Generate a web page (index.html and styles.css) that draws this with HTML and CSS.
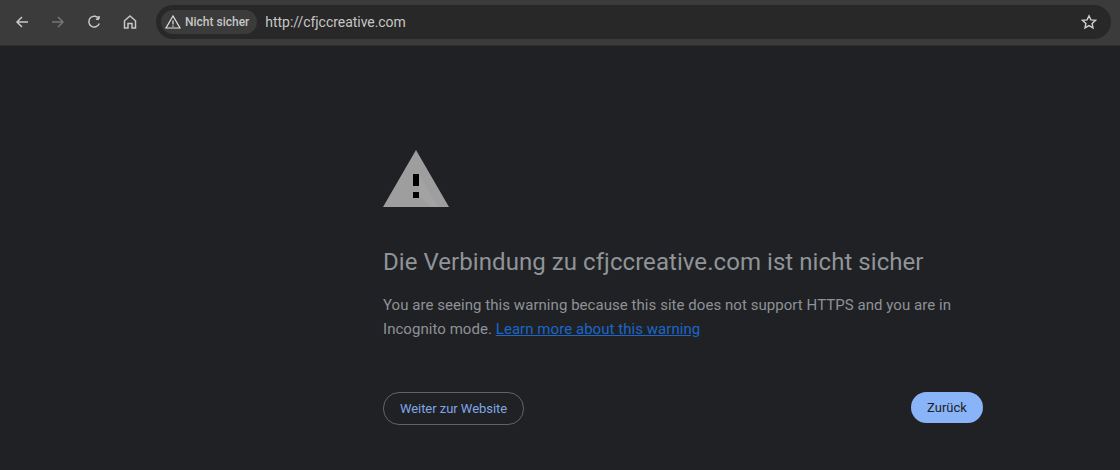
FILE: index.html
```html
<!DOCTYPE html>
<html lang="de">
<head>
  <meta charset="UTF-8" />
  <title>Die Verbindung ist nicht sicher</title>
  <link rel="stylesheet" href="styles.css">
</head>
<body>
  <div class="toolbar">
    <div class="nav-buttons">
      <svg class="nav-icon" viewBox="0 0 16 16"><path d="M14 8H3M8 3 3 8l5 5"/></svg>
      <svg class="nav-icon dim" viewBox="0 0 16 16"><path d="M2 8h11M8 3l5 5-5 5"/></svg>
      <svg class="nav-icon" viewBox="0 0 16 16"><path d="M13 4.800V1.900M13 5.200H9.900M13 5A5.400 5.400 0 1 0 13.300 9.500"/></svg>
      <svg class="nav-icon" viewBox="0 0 16 16"><path d="M2.500 14V6.800L8 2l5.500 4.800V14H10V9.500H6V14z"/></svg>
    </div>
    <div class="omnibox">
      <div class="chip">
        <svg class="chip-icon" viewBox="0 0 16 16"><path d="M8 2 1 14h14z"/><path d="M8 6.500v4M8 11.500v1.200"/></svg>
        <span>Nicht sicher</span>
      </div>
      <span class="url">http://cfjccreative.com</span>
      <svg class="star" viewBox="0 0 16 16"><path d="M8 1.800l1.900 4.100 4.500.5-3.300 3 .9 4.400L8 11.600l-4 2.200.9-4.400-3.300-3 4.500-.5z"/></svg>
    </div>
  </div>

  <main class="content">
    <div class="warning">
      <svg class="warning-icon" viewBox="0 0 66 58">
        <path class="triangle" d="M33 0 66 57H0z"/>
        <path class="triangle-shade" d="M36 24l19 33H48L36 45z"/>
        <rect class="mark" x="30" y="24" width="6" height="12"/>
        <rect class="mark" x="30" y="42" width="6" height="6"/>
      </svg>
      <h1>Die Verbindung zu cfjccreative.com ist nicht sicher</h1>
      <p>You are seeing this warning because this site does not support HTTPS and you are in<br>Incognito mode. <a href="#">Learn more about this warning</a></p>
      <div class="actions">
        <button class="btn-outline">Weiter zur Website</button>
        <button class="btn-primary">Zurück</button>
      </div>
    </div>
  </main>
</body>
</html>
```

FILE: styles.css
```css
html, body {
  margin: 0;
  height: 100%;
}

body {
  background-color: #202124;
  font-family: Roboto, "Liberation Sans", sans-serif;
  overflow: hidden;
}

.toolbar {
  height: 46px;
  background-color: #3b3b3b;
  border-bottom: 1px solid #2e2e2e;
  display: flex;
  align-items: center;
  padding: 0 9px 2px 14px;
  box-sizing: border-box;
}

.nav-buttons {
  display: flex;
  gap: 20px;
  margin-right: 18px;
}

.nav-icon {
  width: 16px;
  height: 16px;
  fill: none;
  stroke: #c7c7c7;
  stroke-width: 1.500;
}

.nav-icon.dim {
  stroke: #757575;
}

.omnibox {
  flex: 1;
  height: 34px;
  border-radius: 17px;
  background-color: #282828;
  display: flex;
  align-items: center;
  padding: 0 14px 0 5px;
  color: #c6c6c6;
}

.chip {
  height: 24px;
  border-radius: 12px;
  background-color: #3b3b3b;
  display: flex;
  align-items: center;
  gap: 4px;
  padding: 0 8px 0 4px;
  font-size: 12px;
  font-weight: 500;
}

.chip-icon {
  width: 16px;
  height: 16px;
  fill: none;
  stroke: #e3e3e3;
  stroke-width: 1.200;
}

.url {
  flex: 1;
  margin-left: 8px;
  font-size: 14px;
  letter-spacing: -0.04px;
}

.star {
  width: 16px;
  height: 16px;
  fill: none;
  stroke: #d0d0d0;
  stroke-width: 1.400;
}

.content {
  padding-left: 383px;
}

.warning {
  width: 600px;
  padding-top: 104px;
}

.warning-icon {
  display: block;
  width: 66px;
  height: 58px;
}

.triangle {
  fill: #9e9e9e;
}

.triangle-shade {
  fill: #a3a3a3;
}

.mark {
  fill: #000;
}

h1 {
  margin: 38px 0 0;
  font-size: 24px;
  line-height: 32px;
  font-weight: 400;
  letter-spacing: 0.06px;
  color: #909499;
}

p {
  margin: 15px 0 0;
  font-size: 15px;
  line-height: 24px;
  color: #8e9297;
  letter-spacing: 0.05px;
}

a {
  color: #1b66c9;
}

.actions {
  display: flex;
  justify-content: space-between;
  align-items: flex-start;
  margin-top: 51px;
}

button {
  font-family: inherit;
  font-size: 13px;
  border-radius: 16px;
  padding: 0;
}

.btn-outline {
  width: 141px;
  height: 33px;
  background: transparent;
  border: 1px solid #5f6368;
  color: #7fa6e6;
  letter-spacing: -0.04px;
}

.btn-primary {
  width: 72px;
  height: 31px;
  background-color: #8ab4f8;
  border: none;
  color: #202124;
}
```
